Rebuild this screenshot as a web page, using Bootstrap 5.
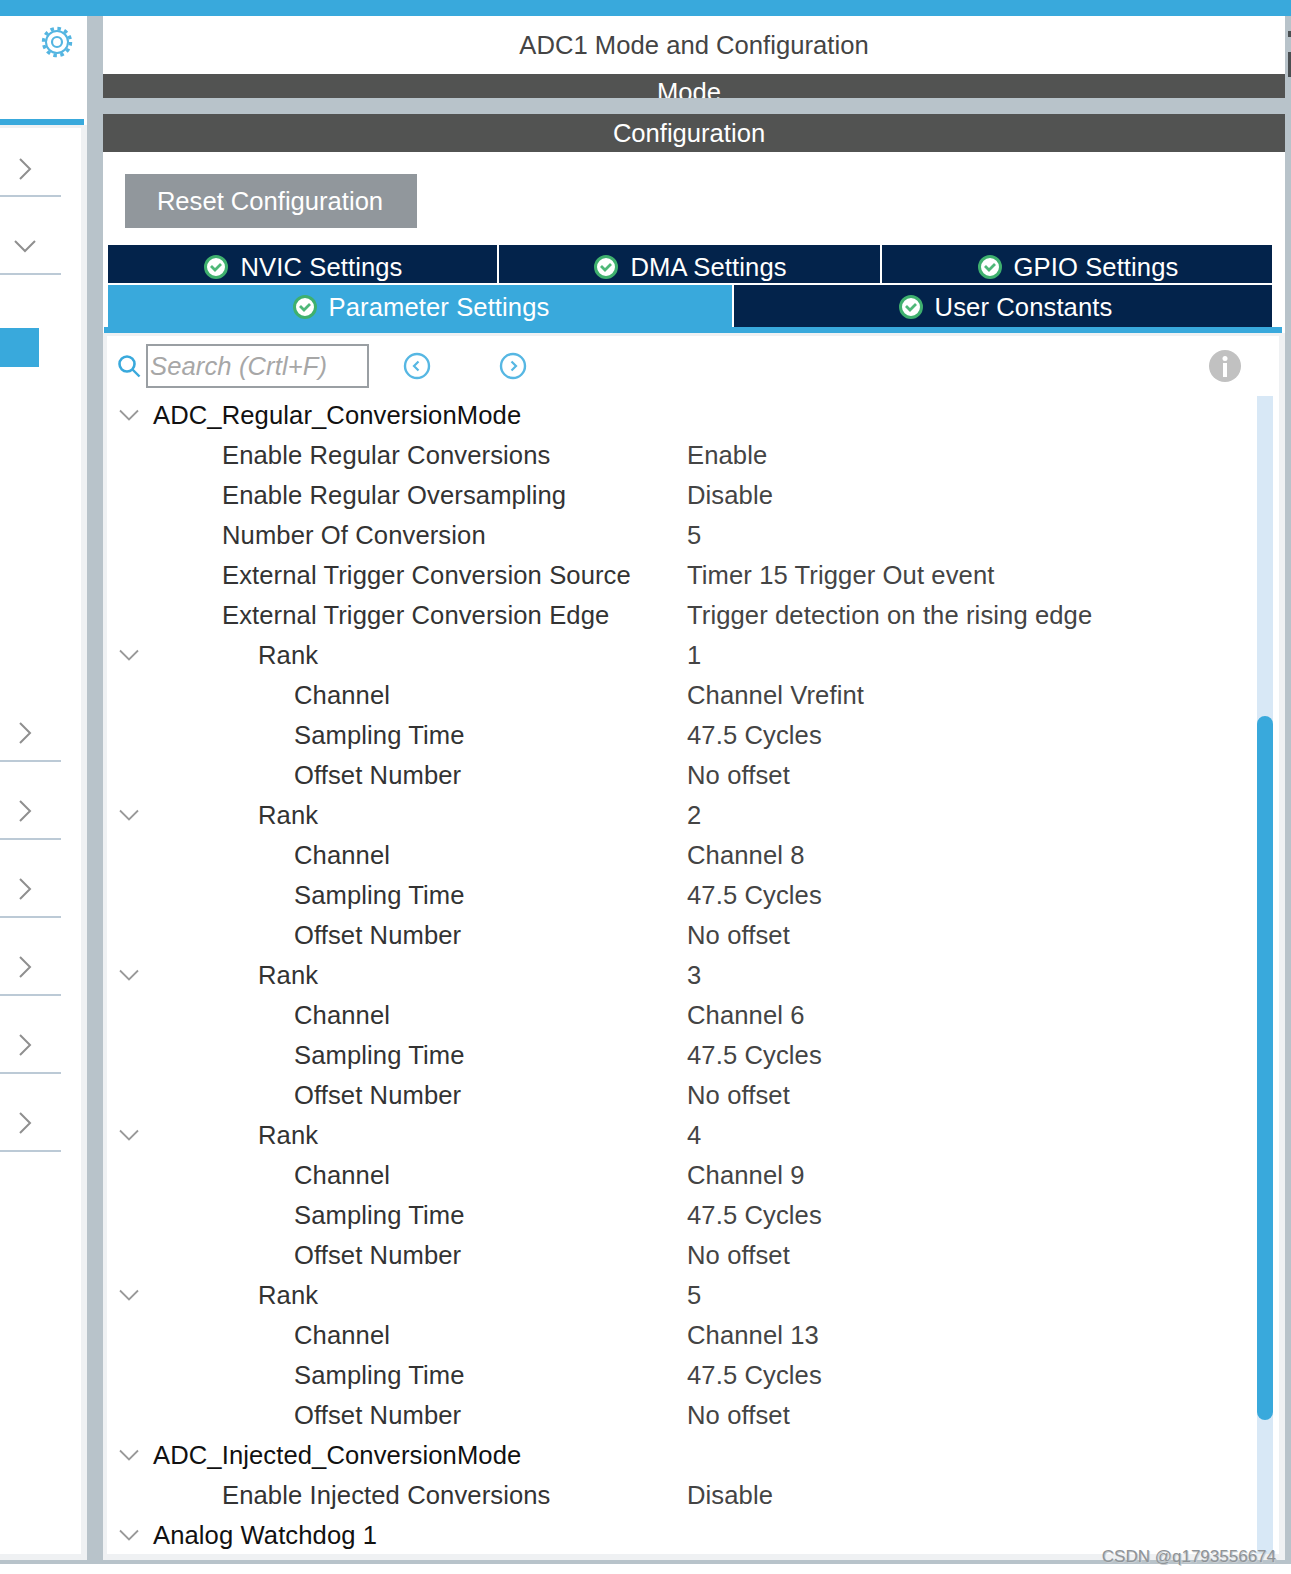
<!DOCTYPE html>
<html lang="en">
<head>
<meta charset="utf-8">
<title>ADC1 Mode and Configuration</title>
<link href="https://cdn.jsdelivr.net/npm/bootstrap@5.3.0/dist/css/bootstrap.min.css" rel="stylesheet">
<style>
:root{--sky:#39a9dc;--navy:#03234b;--slate:#b8c3ca;--ash:#525352;--pale:#eff1f3;}
html,body{margin:0;background:#fff;}
body{width:1291px;height:1574px;overflow:hidden;font-family:"Liberation Sans",Arial,sans-serif;font-size:25.6px;color:#333;position:relative;}
.topstrip{height:16px;background:var(--sky);}
.shell{height:1548px;background:var(--slate);padding-right:6px;position:relative;}
.sidebar{width:87px;height:1544px;background:#fff;flex:none;}
.gearbox{height:103px;padding:10px 0 0 41px;}
.sideblue{height:6px;width:84px;background:var(--sky);}
.sidelist{width:87px;height:1435px;background:#fff;border-top:3px solid var(--pale);border-right:6px solid var(--pale);border-bottom:6px solid var(--pale);}
.sideitem{height:78px;width:61px;border-bottom:2px solid #bccad6;display:flex;align-items:flex-end;justify-content:flex-end;padding-right:29px;padding-bottom:16px;}
.sideitem.firstone{height:69px;padding-bottom:15px;}
.sideitem.openone{padding-right:25px;padding-bottom:20px;}
.sideitem svg{display:block;}
.sideactive{height:39px;width:39px;background:var(--sky);margin:53px 0 0;}
.gapfill{height:317px;}
.main{margin-left:16px;width:1182px;height:1544px;background:#fff;flex:none;}
.wintitle{height:58px;line-height:58px;text-align:center;color:#444;letter-spacing:.03px;white-space:nowrap;}
.headbar{background:var(--ash);color:#fff;text-align:center;overflow:hidden;white-space:nowrap;}
.modebar{height:24px;line-height:36px;padding-right:10px;}
.graygap{height:16px;background:var(--slate);}
.configbar{height:38px;line-height:38px;padding-right:10px;}
.resetzone{height:93px;padding:22px 0 0 22px;}
.resetbtn{width:292px;height:54px;border:0;border-radius:0;background:#91979c;color:#fff;font-size:25.6px;padding:0 2px 0 0;line-height:54px;}
.tabzone{padding:0 0 0 5px;}
.tabrow{display:flex;width:1164px;gap:2px;}
.tabrow+.tabrow{margin-top:2px;}
.tabcell{background:var(--navy);color:#fff;display:flex;align-items:center;justify-content:center;gap:12px;white-space:nowrap;letter-spacing:.1px;}
.tabcell svg{flex:none;}
.rowa .tabcell{height:38px;padding-top:6px;padding-left:2px;}
.rowb .tabcell{height:42px;padding-top:2px;}
.w1{width:389px;}.w2{width:381px;}.w3{width:390px;}.w4{width:624px;padding-left:2px;}.w5{width:538px;padding-left:5px;}
.tabcell.onsky{background:var(--sky);}
.tabline{height:6px;background:var(--sky);margin:0 3px 0 1px;}
.lowerpane{height:1227px;border-top:3px solid var(--pale);border-left:4px solid var(--pale);border-right:6px solid var(--pale);border-bottom:6px solid var(--pale);position:relative;overflow:hidden;}
.toolrow{height:59px;display:flex;align-items:center;padding:1px 0 0 10px;position:relative;}
.searchfield{width:223px;height:44px;border:2px solid #9a9fa3;background:#fff;margin-left:5px;padding:0 2px;font-style:italic;color:#a7a7a7;line-height:40px;letter-spacing:.1px;white-space:nowrap;overflow:hidden;}
.roundbtn{margin-left:34px;}
.roundbtn.nextb{margin-left:68px;}
.infobtn{margin-left:auto;margin-right:38px;}
.treewrap{display:block;letter-spacing:.1px;}
.trow{height:40px;line-height:40px;display:flex;white-space:nowrap;position:relative;}
.tcaret{width:46px;flex:none;display:flex;align-items:center;padding-left:12px;}
.tname{width:534px;flex:none;}
.tnameroot{color:#111;}
.pad1{padding-left:69px;}
.pad2{padding-left:105px;}
.pad3{padding-left:141px;}
.tval{color:#444;}
.scrolltrack{position:absolute;right:6px;top:60px;width:16px;bottom:0;background:#d8e8f6;}
.scrollthumb{position:absolute;left:0;right:0;top:320px;height:704px;background:var(--sky);border-radius:8px;}
.gripa,.gripb{position:absolute;background:#4a4f52;right:0;}
.gripa{top:15px;width:3px;height:6px;}
.gripb{top:36px;width:3px;height:25px;}
.stamp{position:absolute;right:15px;top:1546px;font-size:17px;color:#8f9397;text-shadow:1px 1px 0 #c9cdd0;line-height:22px;white-space:nowrap;}
</style>
</head>
<body>
<div class="topstrip"></div>
<div class="shell d-flex">
  <aside class="sidebar">
    <div class="gearbox">
      <svg class="d-block" width="32" height="32" viewBox="0 0 32 32" fill="none" stroke="#54b5e1"><circle cx="16" cy="16" r="5" stroke-width="2.200"/><circle cx="16" cy="16" r="11" stroke-width="2"/><circle cx="16" cy="16" r="13.500" stroke-width="3.400" stroke-dasharray="3.530 3.540"/></svg>
    </div>
    <div class="sideblue"></div>
    <div class="sidelist">
      <div class="sideitem firstone"><svg width="14" height="22" viewBox="0 0 14 22" fill="none" stroke="#8f8f8f" stroke-width="2"><path d="M2 1l10 10L2 21"/></svg></div>
      <div class="sideitem openone"><svg width="22" height="14" viewBox="0 0 22 14" fill="none" stroke="#8f8f8f" stroke-width="2"><path d="M1 2l10 10L21 2"/></svg></div>
      <div class="sideactive"></div>
      <div class="gapfill"></div>
      <div class="sideitem"><svg width="14" height="22" viewBox="0 0 14 22" fill="none" stroke="#8f8f8f" stroke-width="2"><path d="M2 1l10 10L2 21"/></svg></div>
      <div class="sideitem"><svg width="14" height="22" viewBox="0 0 14 22" fill="none" stroke="#8f8f8f" stroke-width="2"><path d="M2 1l10 10L2 21"/></svg></div>
      <div class="sideitem"><svg width="14" height="22" viewBox="0 0 14 22" fill="none" stroke="#8f8f8f" stroke-width="2"><path d="M2 1l10 10L2 21"/></svg></div>
      <div class="sideitem"><svg width="14" height="22" viewBox="0 0 14 22" fill="none" stroke="#8f8f8f" stroke-width="2"><path d="M2 1l10 10L2 21"/></svg></div>
      <div class="sideitem"><svg width="14" height="22" viewBox="0 0 14 22" fill="none" stroke="#8f8f8f" stroke-width="2"><path d="M2 1l10 10L2 21"/></svg></div>
      <div class="sideitem"><svg width="14" height="22" viewBox="0 0 14 22" fill="none" stroke="#8f8f8f" stroke-width="2"><path d="M2 1l10 10L2 21"/></svg></div>
    </div>
  </aside>
  <main class="main">
    <div class="wintitle">ADC1 Mode and Configuration</div>
    <div class="headbar modebar">Mode</div>
    <div class="graygap"></div>
    <div class="headbar configbar">Configuration</div>
    <div class="resetzone"><button type="button" class="btn resetbtn">Reset Configuration</button></div>
    <div class="tabzone">
      <div class="tabrow rowa">
        <div class="tabcell w1"><svg width="24" height="24" viewBox="0 0 24 24"><circle cx="12" cy="12" r="10.500" fill="#fff" stroke="#3fb06e" stroke-width="3"/><path d="M7 11l4 4 6-6" fill="none" stroke="#4fb878" stroke-width="2.800"/></svg>NVIC Settings</div>
        <div class="tabcell w2"><svg width="24" height="24" viewBox="0 0 24 24"><circle cx="12" cy="12" r="10.500" fill="#fff" stroke="#3fb06e" stroke-width="3"/><path d="M7 11l4 4 6-6" fill="none" stroke="#4fb878" stroke-width="2.800"/></svg>DMA Settings</div>
        <div class="tabcell w3"><svg width="24" height="24" viewBox="0 0 24 24"><circle cx="12" cy="12" r="10.500" fill="#fff" stroke="#3fb06e" stroke-width="3"/><path d="M7 11l4 4 6-6" fill="none" stroke="#4fb878" stroke-width="2.800"/></svg>GPIO Settings</div>
      </div>
      <div class="tabrow rowb">
        <div class="tabcell w4 onsky"><svg width="24" height="24" viewBox="0 0 24 24"><circle cx="12" cy="12" r="10.500" fill="#fff" stroke="#3fb06e" stroke-width="3"/><path d="M7 11l4 4 6-6" fill="none" stroke="#4fb878" stroke-width="2.800"/></svg>Parameter Settings</div>
        <div class="tabcell w5"><svg width="24" height="24" viewBox="0 0 24 24"><circle cx="12" cy="12" r="10.500" fill="#fff" stroke="#3fb06e" stroke-width="3"/><path d="M7 11l4 4 6-6" fill="none" stroke="#4fb878" stroke-width="2.800"/></svg>User Constants</div>
      </div>
    </div>
    <div class="tabline"></div>
    <div class="lowerpane">
      <div class="toolrow">
        <svg width="24" height="26" viewBox="0 0 24 26" fill="none" stroke="#39a9dc"><circle cx="10" cy="11" r="7.500" stroke-width="2.600"/><path d="M15.500 16.500l7 7" stroke-width="2.400"/></svg>
        <div class="searchfield">Search (Crtl+F)</div>
        <svg class="roundbtn" width="28" height="28" viewBox="0 0 28 28" fill="none" stroke="#56b7e3"><circle cx="14" cy="14" r="12" stroke-width="2.400"/><path d="M15.500 9.500L11 14l4.500 4.500" stroke-width="2.200"/></svg>
        <svg class="roundbtn nextb" width="28" height="28" viewBox="0 0 28 28" fill="none" stroke="#56b7e3"><circle cx="14" cy="14" r="12" stroke-width="2.400"/><path d="M12.500 9.500L17 14l-4.500 4.500" stroke-width="2.200"/></svg>
        <svg class="infobtn" width="32" height="32" viewBox="0 0 32 32"><circle cx="16" cy="16" r="16" fill="#c1c1c1"/><rect x="14" y="13" width="4" height="14" fill="#fff"/><circle cx="16" cy="8.500" r="2.500" fill="#fff"/></svg>
      </div>
      <div class="treewrap">
        <div class="trow"><span class="tcaret"><svg width="20" height="12" viewBox="0 0 20 12" fill="none" stroke="#999" stroke-width="1.800"><path d="M1 1.500l9 9 9-9"/></svg></span><span class="tname tnameroot">ADC_Regular_ConversionMode</span></div>
        <div class="trow"><span class="tcaret"></span><span class="tname pad1">Enable Regular Conversions</span><span class="tval">Enable</span></div>
        <div class="trow"><span class="tcaret"></span><span class="tname pad1">Enable Regular Oversampling</span><span class="tval">Disable</span></div>
        <div class="trow"><span class="tcaret"></span><span class="tname pad1">Number Of Conversion</span><span class="tval">5</span></div>
        <div class="trow"><span class="tcaret"></span><span class="tname pad1">External Trigger Conversion Source</span><span class="tval">Timer 15 Trigger Out event</span></div>
        <div class="trow"><span class="tcaret"></span><span class="tname pad1">External Trigger Conversion Edge</span><span class="tval">Trigger detection on the rising edge</span></div>
        <div class="trow"><span class="tcaret"><svg width="20" height="12" viewBox="0 0 20 12" fill="none" stroke="#999" stroke-width="1.800"><path d="M1 1.500l9 9 9-9"/></svg></span><span class="tname pad2">Rank</span><span class="tval">1</span></div>
        <div class="trow"><span class="tcaret"></span><span class="tname pad3">Channel</span><span class="tval">Channel Vrefint</span></div>
        <div class="trow"><span class="tcaret"></span><span class="tname pad3">Sampling Time</span><span class="tval">47.5 Cycles</span></div>
        <div class="trow"><span class="tcaret"></span><span class="tname pad3">Offset Number</span><span class="tval">No offset</span></div>
        <div class="trow"><span class="tcaret"><svg width="20" height="12" viewBox="0 0 20 12" fill="none" stroke="#999" stroke-width="1.800"><path d="M1 1.500l9 9 9-9"/></svg></span><span class="tname pad2">Rank</span><span class="tval">2</span></div>
        <div class="trow"><span class="tcaret"></span><span class="tname pad3">Channel</span><span class="tval">Channel 8</span></div>
        <div class="trow"><span class="tcaret"></span><span class="tname pad3">Sampling Time</span><span class="tval">47.5 Cycles</span></div>
        <div class="trow"><span class="tcaret"></span><span class="tname pad3">Offset Number</span><span class="tval">No offset</span></div>
        <div class="trow"><span class="tcaret"><svg width="20" height="12" viewBox="0 0 20 12" fill="none" stroke="#999" stroke-width="1.800"><path d="M1 1.500l9 9 9-9"/></svg></span><span class="tname pad2">Rank</span><span class="tval">3</span></div>
        <div class="trow"><span class="tcaret"></span><span class="tname pad3">Channel</span><span class="tval">Channel 6</span></div>
        <div class="trow"><span class="tcaret"></span><span class="tname pad3">Sampling Time</span><span class="tval">47.5 Cycles</span></div>
        <div class="trow"><span class="tcaret"></span><span class="tname pad3">Offset Number</span><span class="tval">No offset</span></div>
        <div class="trow"><span class="tcaret"><svg width="20" height="12" viewBox="0 0 20 12" fill="none" stroke="#999" stroke-width="1.800"><path d="M1 1.500l9 9 9-9"/></svg></span><span class="tname pad2">Rank</span><span class="tval">4</span></div>
        <div class="trow"><span class="tcaret"></span><span class="tname pad3">Channel</span><span class="tval">Channel 9</span></div>
        <div class="trow"><span class="tcaret"></span><span class="tname pad3">Sampling Time</span><span class="tval">47.5 Cycles</span></div>
        <div class="trow"><span class="tcaret"></span><span class="tname pad3">Offset Number</span><span class="tval">No offset</span></div>
        <div class="trow"><span class="tcaret"><svg width="20" height="12" viewBox="0 0 20 12" fill="none" stroke="#999" stroke-width="1.800"><path d="M1 1.500l9 9 9-9"/></svg></span><span class="tname pad2">Rank</span><span class="tval">5</span></div>
        <div class="trow"><span class="tcaret"></span><span class="tname pad3">Channel</span><span class="tval">Channel 13</span></div>
        <div class="trow"><span class="tcaret"></span><span class="tname pad3">Sampling Time</span><span class="tval">47.5 Cycles</span></div>
        <div class="trow"><span class="tcaret"></span><span class="tname pad3">Offset Number</span><span class="tval">No offset</span></div>
        <div class="trow"><span class="tcaret"><svg width="20" height="12" viewBox="0 0 20 12" fill="none" stroke="#999" stroke-width="1.800"><path d="M1 1.500l9 9 9-9"/></svg></span><span class="tname tnameroot">ADC_Injected_ConversionMode</span></div>
        <div class="trow"><span class="tcaret"></span><span class="tname pad1">Enable Injected Conversions</span><span class="tval">Disable</span></div>
        <div class="trow"><span class="tcaret"><svg width="20" height="12" viewBox="0 0 20 12" fill="none" stroke="#999" stroke-width="1.800"><path d="M1 1.500l9 9 9-9"/></svg></span><span class="tname tnameroot">Analog Watchdog 1</span></div>
      </div>
      <div class="scrolltrack"><div class="scrollthumb"></div></div>
    </div>
  </main>
  <span class="gripa"></span><span class="gripb"></span>
</div>
<div class="stamp">CSDN @q1793556674</div>
</body>
</html>
